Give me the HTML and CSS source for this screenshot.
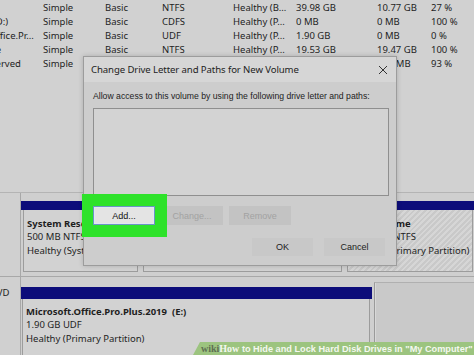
FILE: index.html
```html
<!DOCTYPE html>
<html>
<head>
<meta charset="utf-8">
<link rel="stylesheet" href="styles.css">
</head>
<body>
<div class="screen">
  <div class="volumes">
    <div class="vrow"><span>(C:)</span><span>Simple</span><span>Basic</span><span>NTFS</span><span>Healthy (B...</span><span>39.98 GB</span><span>10.77 GB</span><span>27 %</span></div>
    <div class="vrow"><span>DVD Drive (D:)</span><span>Simple</span><span>Basic</span><span>CDFS</span><span>Healthy (P...</span><span>0 MB</span><span>0 MB</span><span>100 %</span></div>
    <div class="vrow"><span>Microsoft.Office.Pr...</span><span>Simple</span><span>Basic</span><span>UDF</span><span>Healthy (P...</span><span>1.90 GB</span><span>0 MB</span><span>0 %</span></div>
    <div class="vrow"><span>New Volume</span><span>Simple</span><span>Basic</span><span>NTFS</span><span>Healthy (P...</span><span>19.53 GB</span><span>19.47 GB</span><span>100 %</span></div>
    <div class="vrow"><span>System Reserved</span><span>Simple</span><span></span><span></span><span></span><span></span><span>465 MB</span><span>93 %</span></div>
  </div>

  <div class="disk disk0">
    <div class="dlabel"></div>
    <div class="parts">
      <div class="part p1">
        <div class="bar"></div>
        <div class="pbox"><b>System Reserved</b><span>500 MB NTFS</span><span>Healthy (System, Active)</span></div>
      </div>
      <div class="part p2">
        <div class="bar"></div>
        <div class="pbox"></div>
      </div>
      <div class="part p3">
        <div class="bar"></div>
        <div class="pbox hatched"><b>New Volume</b><span>19.53 GB NTFS</span><span>Healthy (Primary Partition)</span></div>
      </div>
    </div>
  </div>

  <div class="disk disk1">
    <div class="dlabel"><span class="dname">DVD</span></div>
    <div class="parts">
      <div class="part p4">
        <div class="bar"></div>
        <div class="pbox"><b>Microsoft.Office.Pro.Plus.2019&nbsp;&nbsp;(E:)</b><span>1.90 GB UDF</span><span>Healthy (Primary Partition)</span></div>
      </div>
      <div class="rest"></div>
    </div>
  </div>

  <div class="dialog">
    <div class="titlebar">
      <span class="title">Change Drive Letter and Paths for New Volume</span>
      <svg class="close" width="10" height="10" viewBox="0 0 10 10"><path d="M1 1 L9 9 M9 1 L1 9" stroke="#333" stroke-width="1" fill="none"/></svg>
    </div>
    <div class="dbody">
      <div class="prompt">Allow access to this volume by using the following drive letter and paths:</div>
      <div class="listbox"></div>
      <div class="btnrow">
        <div class="btn add">Add...</div>
        <div class="btn disabled">Change...</div>
        <div class="btn disabled">Remove</div>
      </div>
      <div class="okrow">
        <div class="btn plain">OK</div>
        <div class="btn plain">Cancel</div>
      </div>
    </div>
    <div class="highlight"></div>
  </div>

  <div class="banner"><span class="wiki">wiki</span><span class="how">How</span><span class="btxt"> to Hide and Lock Hard Disk Drives in "My Computer"</span></div>
</div>
</body>
</html>
```

FILE: styles.css
```css
* { box-sizing: border-box; }
body {
  margin: 0;
  background: #cfcfcf;
  font-family: "Noto Sans", "Liberation Sans", sans-serif;
  color: #1e1e1e;
}
.screen {
  position: relative;
  width: 474px;
  height: 355px;
  overflow: hidden;
  background: #cfcfcf;
  display: grid;
  grid-template-rows: 193px 84px 78px;
}
.volumes {
  padding-top: 1px;
  border-bottom: 1px solid #b4b4b4;
  background: #d1d1d1;
  overflow: hidden;
}
.vrow {
  display: grid;
  grid-template-columns: 98px 62px 57px 71px 63px 81px 54px 43px;
  margin-left: -55px;
  height: 14px;
  font-size: 9.5px;
  line-height: 14px;
  white-space: nowrap;
}
.vrow span { overflow: hidden; }

.disk {
  display: grid;
  grid-template-columns: 21px 1fr;
  border-bottom: 1px solid #a8a8a8;
  overflow: hidden;
}
.disk1 { border-bottom: 0; }
.dlabel {
  border-right: 1px solid #a8a8a8;
  background: #d0d0d0;
  font-size: 9.5px;
  overflow: hidden;
  white-space: nowrap;
}
.dname {
  display: block;
  margin-top: 9px;
  margin-left: -10px;
}
.parts {
  display: flex;
  align-items: flex-start;
}
.disk0 .parts { padding-top: 8px; }
.disk1 .parts { padding-top: 10px; }
.part {
  display: flex;
  flex-direction: column;
}
.p1 { width: 120px; }
.p2 { width: 204px; }
.p3 { flex: 1; }
.p4 { width: 351px; }
.bar { height: 9px; background: #0d0d7a; }
.p4 .bar { height: 12px; }
.pbox {
  height: 62px;
  display: flex;
  flex-direction: column;
  margin: 0 3px 0 2px;
  border: 1px solid #9c9c9c;
  border-top: 0;
  padding: 7px 3px 0;
  font-size: 9.5px;
  line-height: 13.4px;
  white-space: nowrap;
  overflow: hidden;
  background: #d2d2d2;
}
.p3 .pbox { margin-right: 2px; }
.p4 .pbox { height: 60px; margin: 0 2px 0 1px; border-bottom: 0; padding-top: 6px; }
.pbox b { font-weight: 700; }
.hatched {
  background: repeating-linear-gradient(135deg, #d6d6d6 0 2px, #c9c9c9 2px 4px);
}
.rest {
  flex: 1;
  align-self: stretch;
  margin-top: -5px;
  margin-left: 2px;
  border-left: 1px solid #9a9a9a;
  border-top: 1px solid #b0b0b0;
  box-shadow: inset 1px 0 0 #d8d8d8;
  background: #c9c9c9;
}

.dialog {
  position: absolute;
  left: 83px;
  top: 56px;
  width: 314px;
  height: 210px;
  background: #cdcdcd;
  border: 1px solid #9c9c9c;
  box-shadow: 0 0 5px rgba(0,0,0,0.18);
  display: flex;
  flex-direction: column;
}
.titlebar {
  height: 25px;
  flex: none;
  display: flex;
  align-items: center;
  justify-content: space-between;
  padding: 0 8px 0 7px;
  background: #d6d6d6;
  font-size: 9.6px;
  letter-spacing: -0.1px;
  color: #222;
}
.close { display: block; }
.dbody {
  flex: 1;
  display: flex;
  flex-direction: column;
  padding: 7px 7px 0 9px;
}
.prompt {
  font-family: "Liberation Sans", Arial, sans-serif;
  font-size: 8.67px;
  line-height: 14px;
  white-space: nowrap;
  color: #222;
}
.listbox {
  height: 88px;
  flex: none;
  margin-top: 5px;
  border: 1px solid #8f8f8f;
  background: #d3d3d3;
}
.btnrow {
  display: flex;
  gap: 6px;
  margin-top: 10px;
}
.okrow {
  display: flex;
  justify-content: flex-end;
  gap: 11px;
  margin-top: 13px;
  margin-right: 4px;
}
.btn {
  width: 62px;
  height: 19px;
  display: flex;
  align-items: center;
  justify-content: center;
  font-family: "Liberation Sans", Arial, sans-serif;
  font-size: 9px;
}
.add {
  position: relative;
  z-index: 1;
  background: #e4e4e4;
  border: 1px solid #6b94c4;
  box-shadow: inset 0 0 0 1px #dfe8f2;
  color: #111;
}
.disabled {
  background: #c3c3c3;
  color: #a2a2a2;
}
.plain {
  width: 61px;
  height: 18px;
  background: #c8c8c8;
  color: #222;
}
.highlight {
  position: absolute;
  left: -2px;
  top: 137px;
  width: 85px;
  height: 43px;
  background: #2ee22a;
}

.banner {
  position: absolute;
  left: 193px;
  top: 342px;
  width: 281px;
  height: 13px;
  padding-left: 8px;
  background: #9cc47f;
  clip-path: polygon(7px 0, 100% 0, 100% 100%, 0 100%);
  display: flex;
  align-items: center;
  white-space: nowrap;
  color: #f4f8f0;
}
.wiki {
  font-family: "Liberation Serif", serif;
  font-weight: 700;
  font-size: 10px;
  color: #5f6f52;
}
.how {
  font-family: "Liberation Serif", serif;
  font-weight: 700;
  font-size: 10px;
  color: #f4f8f0;
}
.btxt {
  font-family: "Liberation Sans", Arial, sans-serif;
  font-weight: 700;
  font-size: 9.2px;
  white-space: pre;
}
```
